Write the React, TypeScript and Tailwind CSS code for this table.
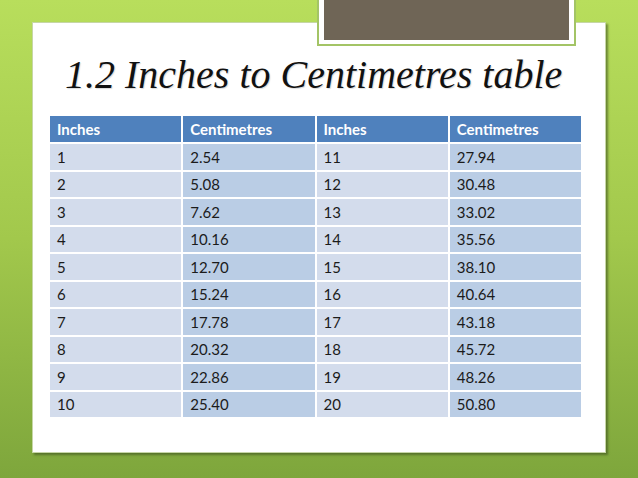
import React from 'react';

const rows: [string, string, string, string][] = [
  ['1', '2.54', '11', '27.94'],
  ['2', '5.08', '12', '30.48'],
  ['3', '7.62', '13', '33.02'],
  ['4', '10.16', '14', '35.56'],
  ['5', '12.70', '15', '38.10'],
  ['6', '15.24', '16', '40.64'],
  ['7', '17.78', '17', '43.18'],
  ['8', '20.32', '18', '45.72'],
  ['9', '22.86', '19', '48.26'],
  ['10', '25.40', '20', '50.80'],
];

const headers = ['Inches', 'Centimetres', 'Inches', 'Centimetres'];

const App = () => {
  return (
    <div className="relative w-[638px] h-[478px] overflow-hidden bg-gradient-to-b from-[#b8de5c] via-[#a2c84c] to-[#7ea63c] pt-[22px] pl-[32px]">
      {/* brown placeholder box at top */}
      <div className="absolute left-[317px] top-0 w-[259px] h-[46px] border-2 border-t-0 border-[#a3c466] bg-white px-[5px] pb-[4px] z-10">
        <div className="w-full h-full bg-[#6f6556]" />
      </div>

      <div className="w-[574px] h-[431px] bg-white border border-[#c6d6a6] shadow-[2px_2px_2px_rgba(60,80,30,0.6)] flex flex-col pl-[17px]">
        <h1 className="mt-[28px] ml-[15px] text-[40px] leading-[48px] italic text-[#111] [font-family:'Liberation_Serif',serif] [text-shadow:1px_1px_1px_rgba(0,0,0,0.15)]">
          1.2 Inches to Centimetres table
        </h1>

        <div className="mt-[17px] w-[531px] grid grid-cols-4 gap-x-[2px] [font-family:Lato,'Open_Sans',sans-serif]">
          {headers.map((h, i) => (
            <div
              key={i}
              className="h-[26px] bg-[#4f81bd] text-white font-bold text-[15px] flex items-center pl-[7px]"
            >
              {h}
            </div>
          ))}
          {rows.map((r, ri) =>
            r.map((c, ci) => (
              <div
                key={`${ri}-${ci}`}
                className={`h-[27.5px] border-t-2 border-white flex items-center pl-[7px] text-[15px] text-[#1b1b1b] ${
                  ci % 2 === 0 ? 'bg-[#d3dcec]' : 'bg-[#bacde5]'
                }`}
              >
                {c}
              </div>
            ))
          )}
        </div>
      </div>
    </div>
  );
};

export default App;
